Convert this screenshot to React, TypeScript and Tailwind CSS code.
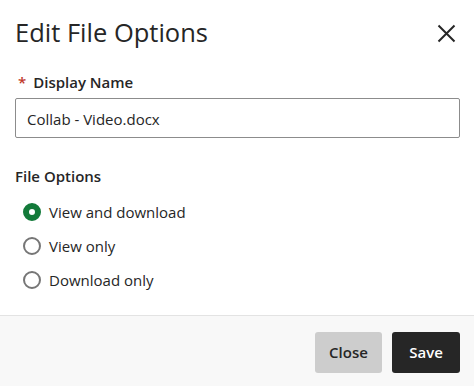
import React, { useState } from 'react'

const options = ['View and download', 'View only', 'Download only']

export default function App() {
  const [selected, setSelected] = useState(0)
  const [name, setName] = useState('Collab - Video.docx')

  return (
    <div className="w-[474px] h-[386px] bg-white flex flex-col text-[#262626] font-['Open_Sans',sans-serif] overflow-hidden">
      <div className="flex flex-col pl-[15px] pr-[14px] flex-1">
        {/* header */}
        <div className="flex items-center justify-between pt-[14px]">
          <h2 className="text-[25.5px] leading-[36px] font-normal">Edit File Options</h2>
          <button className="w-[30px] h-[30px] flex items-center justify-center mr-[-1px] mt-[2px]" aria-label="Close">
            <svg width="19" height="19" viewBox="0 0 19 19" fill="none" stroke="#262626" strokeWidth="2">
              <path d="M1.5 1.5 L17.5 17.5 M17.5 1.5 L1.5 17.5" />
            </svg>
          </button>
        </div>

        {/* display name */}
        <label className="mt-[22px] text-[15px] leading-[20px] font-semibold flex items-center">
          <span className="text-[#c0392b] ml-[3px] mr-[7px]">*</span>
          Display Name
        </label>
        <input
          className="mt-[6px] h-[40px] w-full border border-[#8c8c8c] rounded-[2px] px-[11px] pt-[2px] text-[15px] leading-[20px] text-[#262626] outline-none"
          value={name}
          onChange={(e) => setName(e.target.value)}
        />

        {/* file options */}
        <div className="mt-[28px] text-[15px] leading-[20px] font-semibold">File Options</div>
        <div className="flex flex-col mt-[9px] pl-[8px]">
          {options.map((opt, i) => (
            <label
              key={opt}
              className="h-[34px] flex items-center gap-[8px] text-[15px] leading-[20px] cursor-pointer"
              onClick={() => setSelected(i)}
            >
              <span
                className={
                  i === selected
                    ? 'w-[18px] h-[18px] rounded-full border-[6px] border-[#137a3a] bg-white'
                    : 'w-[18px] h-[18px] rounded-full border-2 border-[#767676] bg-white'
                }
              />
              {opt}
            </label>
          ))}
        </div>
      </div>

      {/* footer */}
      <div className="h-[71px] border-t border-[#e3e3e3] bg-[#f8f8f8] flex justify-end items-start gap-[10px] pt-[16px] pr-[14px]">
        <button className="w-[67px] h-[41px] rounded-[3px] bg-[#cdcdcd] text-[15px] font-semibold text-[#262626]">
          Close
        </button>
        <button className="w-[68px] h-[41px] rounded-[3px] bg-[#262626] text-[15px] font-semibold text-white">
          Save
        </button>
      </div>
    </div>
  )
}
